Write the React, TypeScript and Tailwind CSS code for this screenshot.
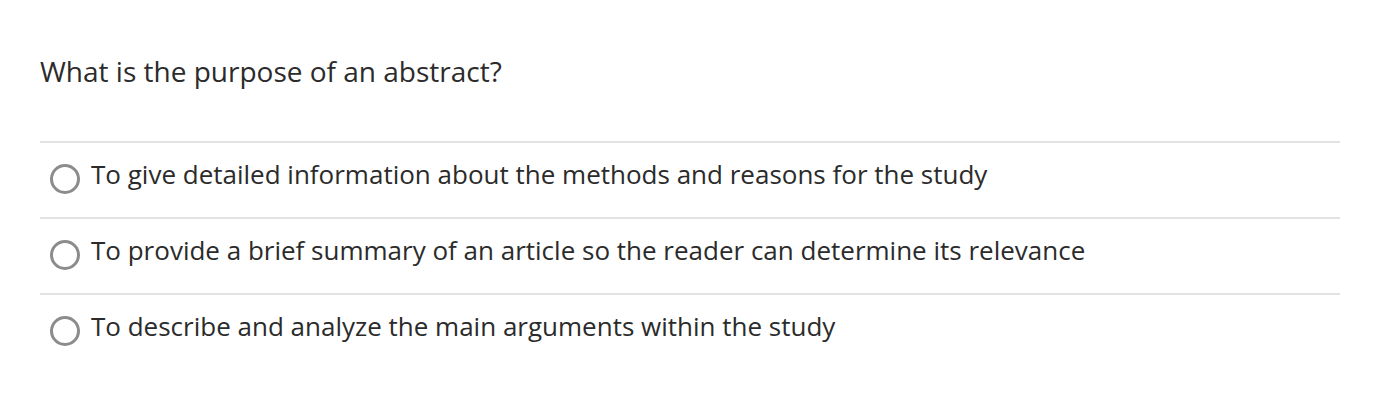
import React from 'react';

const options = [
    'To give detailed information about the methods and reasons for the study',
    'To provide a brief summary of an article so the reader can determine its relevance',
    'To describe and analyze the main arguments within the study',
];

const App: React.FC = () => (
    <div className="w-[1375px] h-[402px] bg-white pl-10 pr-[35px] pt-[54px] text-[#2b2b2b] font-['Open_Sans',sans-serif]">
        <p className="text-[28px] leading-[34px]">What is the purpose of an abstract?</p>
        <div className="mt-[53px]">
            {options.map((opt, i) => (
                <label key={i} className="flex items-center gap-[11px] h-[76px] border-t-2 border-[#e2e2e2] pl-[10px] pb-[12px]">
                    <span className="mt-[10px] w-[30px] h-[30px] rounded-full border-[3px] border-[#8c8c8c] shrink-0" />
                    <span className="text-[26px] leading-[normal]">{opt}</span>
                </label>
            ))}
        </div>
    </div>
);

export default App;
